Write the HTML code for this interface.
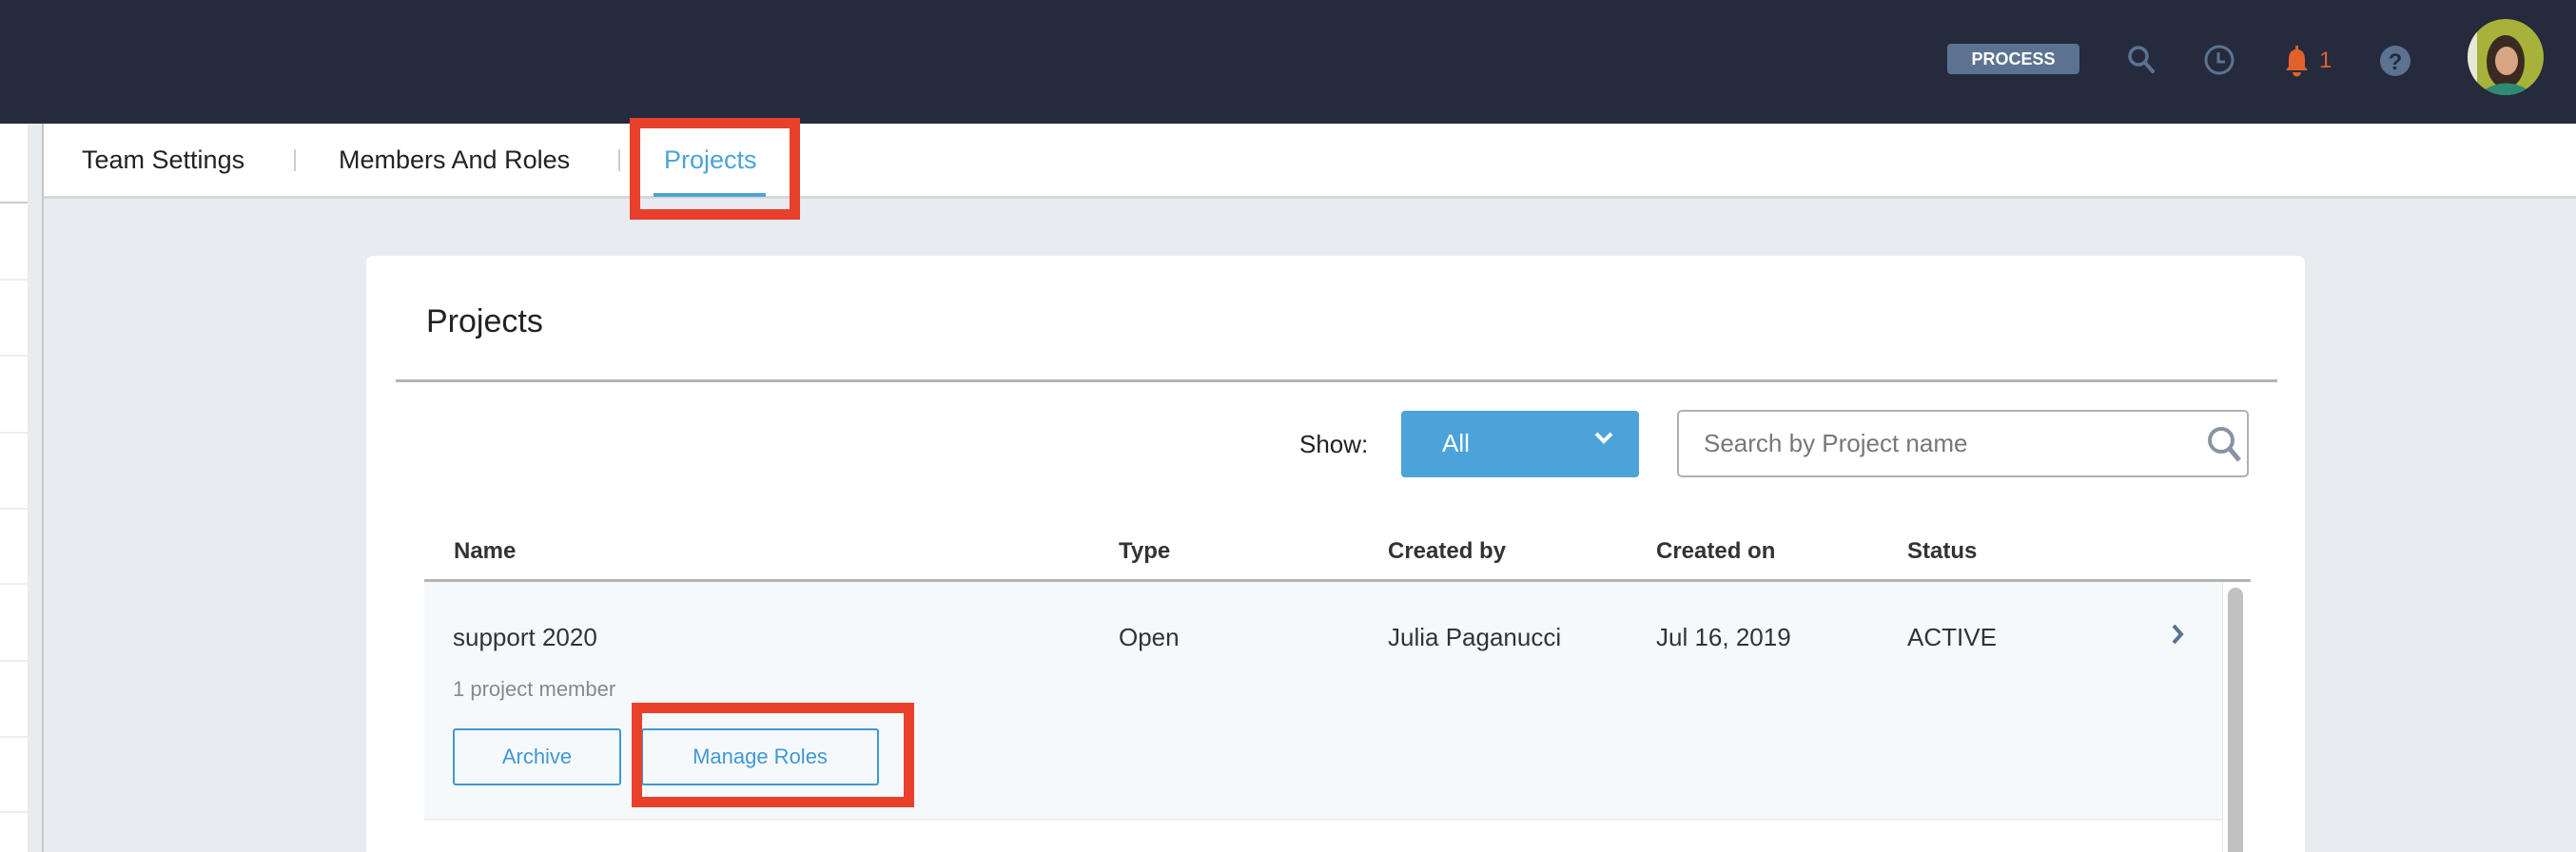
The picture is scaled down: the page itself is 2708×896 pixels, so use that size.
<!DOCTYPE html>
<html><head><meta charset="utf-8"><style>
*{margin:0;padding:0;box-sizing:border-box}
html,body{width:2708px;height:896px;overflow:hidden}
body{background:#e8ebef;font-family:"Liberation Sans",sans-serif;position:relative;color:#222}
.a{position:absolute;white-space:nowrap}
</style></head><body>
<div class="a" style="left:0;top:0;width:2708px;height:130px;background:#252a3d"></div>
<div class="a" style="left:2047px;top:46px;width:139px;height:32px;background:#5b7390;border-radius:4px;color:#fff;font-size:18px;font-weight:bold;text-align:center;line-height:32px">PROCESS</div>
<svg class="a" style="left:2234px;top:45px" width="36" height="36" viewBox="0 0 36 36"><circle cx="14" cy="14" r="9" fill="none" stroke="#5b7390" stroke-width="3.5"/><line x1="21" y1="21" x2="29" y2="30" stroke="#5b7390" stroke-width="4" stroke-linecap="round"/></svg>
<svg class="a" style="left:2316px;top:46px" width="36" height="36" viewBox="0 0 36 36"><circle cx="17" cy="17" r="14" fill="none" stroke="#5b7390" stroke-width="3"/><path d="M16 9v10h7" fill="none" stroke="#5b7390" stroke-width="3"/></svg>
<svg class="a" style="left:2400px;top:47px" width="30" height="34" viewBox="0 0 30 34"><path d="M13 1h3v4c5 1 7 5 7 10v8l3 4H3l3-4v-8c0-5 2-9 7-10z" fill="#e0622a"/><path d="M10 29h9a4.5 4.5 0 0 1-9 0z" fill="#e0622a"/></svg>
<div class="a" style="left:2438px;top:50px;color:#e0622a;font-size:24px">1</div>
<svg class="a" style="left:2501px;top:47px" width="34" height="34" viewBox="0 0 34 34"><circle cx="17" cy="17" r="16" fill="#5b7390"/><text x="17" y="26" text-anchor="middle" font-family="Liberation Sans" font-weight="bold" font-size="24" fill="#252a3d">?</text></svg>
<svg class="a" style="left:2594px;top:20px" width="80" height="80" viewBox="0 0 80 80"><defs><clipPath id="c"><circle cx="40" cy="40" r="40"/></clipPath></defs><g clip-path="url(#c)"><rect width="80" height="80" fill="#a6b23a"/><rect x="0" y="0" width="10" height="80" fill="#e8e8d8"/><ellipse cx="40" cy="45" rx="20" ry="28" fill="#3a2a22"/><ellipse cx="41" cy="44" rx="12" ry="15" fill="#d8a584"/><path d="M10 80 Q40 55 72 80z" fill="#2f8a74"/></g></svg>

<div class="a" style="left:0;top:130px;width:29px;height:766px;background:#fff"></div>
<div class="a" style="left:0;top:212px;width:29px;height:2px;background:#ccc"></div>
<div class="a" style="left:0;top:293px;width:29px;height:2px;background:#eee"></div>
<div class="a" style="left:0;top:373px;width:29px;height:2px;background:#eee"></div>
<div class="a" style="left:0;top:454px;width:29px;height:2px;background:#eee"></div>
<div class="a" style="left:0;top:534px;width:29px;height:2px;background:#eee"></div>
<div class="a" style="left:0;top:613px;width:29px;height:2px;background:#eee"></div>
<div class="a" style="left:0;top:694px;width:29px;height:2px;background:#eee"></div>
<div class="a" style="left:0;top:774px;width:29px;height:2px;background:#eee"></div>
<div class="a" style="left:0;top:853px;width:29px;height:2px;background:#eee"></div>
<div class="a" style="left:29px;top:130px;width:17px;height:766px;background:#e8ebef;border-right:2px solid #c8c8c8"></div>

<div class="a" style="left:46px;top:130px;width:2662px;height:79px;background:#fff;border-bottom:3px solid #d8d8d8"></div>
<div class="a" style="left:86px;top:153px;font-size:27px;color:#222">Team Settings</div>
<div class="a" style="left:309px;top:157px;width:2px;height:23px;background:#ccc"></div>
<div class="a" style="left:356px;top:153px;font-size:27px;color:#222">Members And Roles</div>
<div class="a" style="left:650px;top:157px;width:2px;height:23px;background:#ccc"></div>
<div class="a" style="left:698px;top:153px;font-size:27px;color:#4ba3da">Projects</div>
<div class="a" style="left:687px;top:203px;width:118px;height:4px;background:#4ba3da"></div>
<div class="a" style="left:662px;top:124px;width:179px;height:107px;border:11px solid #e8402a"></div>

<div class="a" style="left:385px;top:269px;width:2038px;height:640px;background:#fff;border-radius:7px"></div>
<div class="a" style="left:448px;top:319px;font-size:34px;color:#222">Projects</div>
<div class="a" style="left:416px;top:399px;width:1978px;height:3px;background:#b4b4b4"></div>
<div class="a" style="left:1366px;top:452px;font-size:26px;color:#222">Show:</div>
<div class="a" style="left:1473px;top:432px;width:250px;height:70px;background:#4ba3da;border-radius:4px"></div>
<div class="a" style="left:1516px;top:451px;font-size:26px;color:#fff">All</div>
<svg class="a" style="left:1675px;top:452px" width="22" height="18" viewBox="0 0 22 18"><path d="M3 4l8 8 8-8" fill="none" stroke="#fff" stroke-width="4"/></svg>
<div class="a" style="left:1763px;top:431px;width:601px;height:71px;border:2px solid #b0b0b0;border-radius:5px;background:#fff"></div>
<div class="a" style="left:1791px;top:451px;font-size:26px;color:#777">Search by Project name</div>
<svg class="a" style="left:2318px;top:446px" width="42" height="42" viewBox="0 0 42 42"><circle cx="17" cy="17" r="12" fill="none" stroke="#8a93a3" stroke-width="4"/><line x1="26" y1="26" x2="36" y2="38" stroke="#8a93a3" stroke-width="5"/></svg>

<div class="a" style="left:477px;top:566px;font-size:24px;font-weight:bold;color:#333">Name</div>
<div class="a" style="left:1176px;top:566px;font-size:24px;font-weight:bold;color:#333">Type</div>
<div class="a" style="left:1459px;top:566px;font-size:24px;font-weight:bold;color:#333">Created by</div>
<div class="a" style="left:1741px;top:566px;font-size:24px;font-weight:bold;color:#333">Created on</div>
<div class="a" style="left:2005px;top:566px;font-size:24px;font-weight:bold;color:#333">Status</div>
<div class="a" style="left:446px;top:609px;width:1920px;height:3px;background:#b4b4b4"></div>
<div class="a" style="left:446px;top:612px;width:1890px;height:251px;background:#f6f9fc;border-bottom:2px solid #eee"></div>
<div class="a" style="left:2336px;top:612px;width:28px;height:284px;background:#fff;border-left:1px solid #e6e6e6"></div>
<div class="a" style="left:2342px;top:618px;width:16px;height:290px;background:#c1c1c1;border-radius:8px"></div>
<div class="a" style="left:476px;top:655px;font-size:26px;color:#333">support 2020</div>
<div class="a" style="left:476px;top:712px;font-size:22px;color:#888">1 project member</div>
<div class="a" style="left:1176px;top:655px;font-size:26px;color:#333">Open</div>
<div class="a" style="left:1459px;top:655px;font-size:26px;color:#333">Julia Paganucci</div>
<div class="a" style="left:1741px;top:655px;font-size:26px;color:#333">Jul 16, 2019</div>
<div class="a" style="left:2005px;top:655px;font-size:26px;color:#333">ACTIVE</div>
<svg class="a" style="left:2280px;top:654px" width="20" height="26" viewBox="0 0 20 26"><path d="M5 4l8 9-8 9" fill="none" stroke="#5b7390" stroke-width="4"/></svg>
<div class="a" style="left:476px;top:766px;width:177px;height:60px;border:2px solid #4098d4;border-radius:3px;color:#4098d4;font-size:22px;text-align:center;line-height:56px">Archive</div>
<div class="a" style="left:674px;top:766px;width:250px;height:60px;border:2px solid #4098d4;border-radius:3px;color:#4098d4;font-size:22px;text-align:center;line-height:56px">Manage Roles</div>
<div class="a" style="left:664px;top:739px;width:297px;height:110px;border:11px solid #e8402a"></div>
</body></html>
